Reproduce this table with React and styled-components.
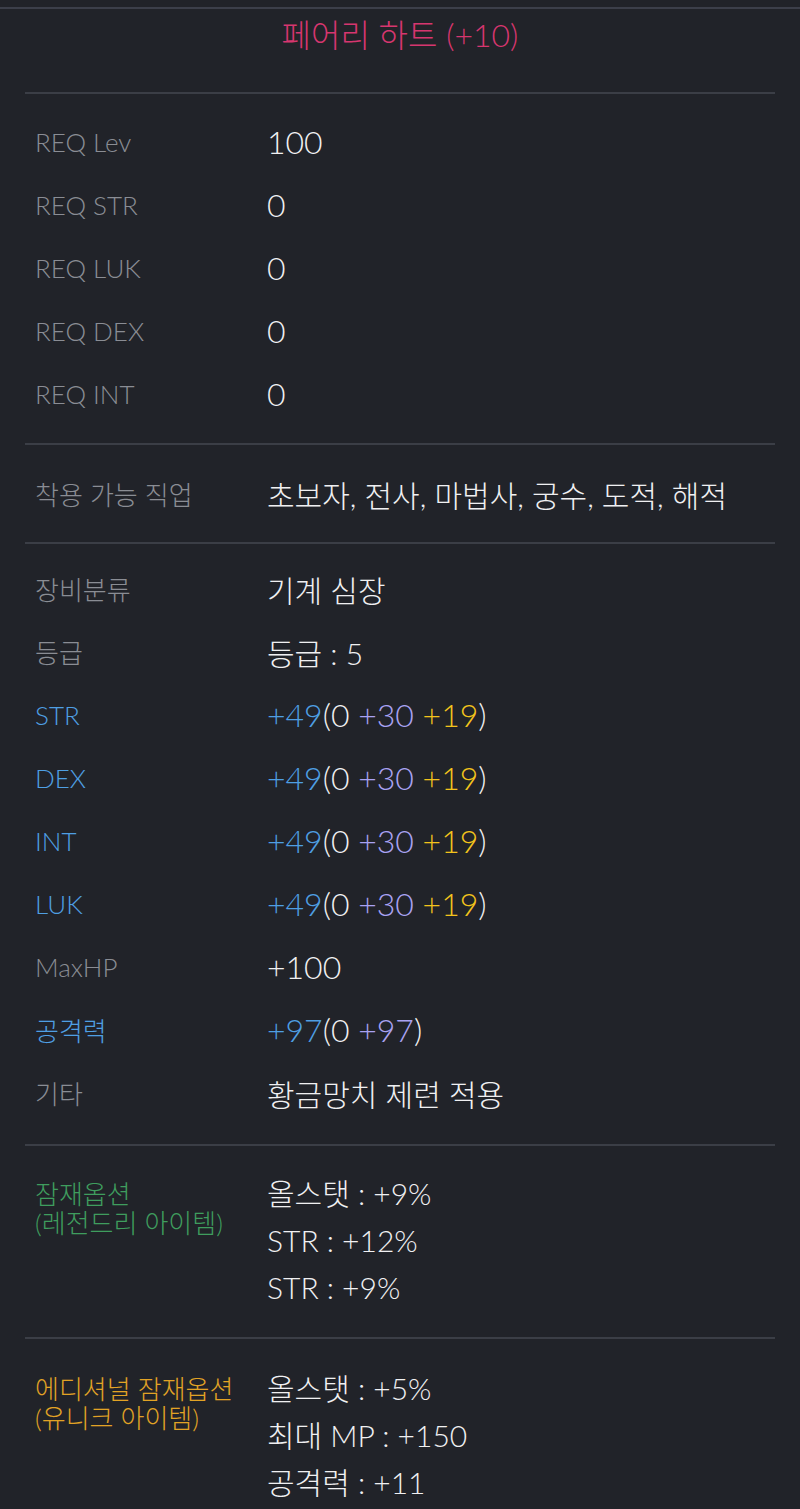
import React from "react";
import styled, { createGlobalStyle } from "styled-components";

const GlobalStyle = createGlobalStyle`
  html, body {
    margin: 0;
    padding: 0;
    background: #212329;
  }
  body {
    font-family: "Lato", "Noto Sans CJK KR", sans-serif;
    font-weight: 300;
    -webkit-font-smoothing: antialiased;
  }
`;

const Page = styled.div`
  width: 800px;
  min-height: 1509px;
  background: #212329;
  border-top: 2px solid #3c3f4a;
  margin-top: 7px;
  box-sizing: border-box;
`;

const Title = styled.h1`
  margin: 0;
  height: 55px;
  display: flex;
  align-items: center;
  justify-content: center;
  padding-bottom: 8px;
  box-sizing: border-box;
  font-weight: 300;
  font-size: 32px;
  color: #d6366f;
`;

const Body = styled.div`
  margin: 0 25px;
  padding-top: 28px;
`;

const Section = styled.section`
  border-top: 2px solid #3b3e46;
  padding: ${(p) => p.$pad || "17px 10px 17px"};
`;

const Row = styled.div`
  display: grid;
  grid-template-columns: 232px 1fr;
  align-items: center;
  height: 63px;
`;

const OptionRow = styled.div`
  display: grid;
  grid-template-columns: 232px 1fr;
  align-items: start;
`;

const Label = styled.div`
  font-size: 26px;
  color: ${(p) => p.$color || "#8a8d94"};
  white-space: nowrap;
`;

const OptionLabel = styled.div`
  padding-top: 10px;
  font-size: 26px;
  line-height: 29px;
  color: ${(p) => p.$color};
  white-space: nowrap;
`;

const Value = styled.div`
  font-size: ${(p) => (p.$ko ? "30px" : "32px")};
  color: #f0f0f2;
  white-space: nowrap;
`;

const Lines = styled.div`
  display: flex;
  flex-direction: column;
`;

const Line = styled.div`
  height: 47px;
  line-height: 47px;
  font-size: 30px;
  color: #f0f0f2;
  white-space: nowrap;
`;

const Tone = styled.span`
  color: ${(p) => p.$c};
`;

const BLUE = "#4f9fe3";
const PURPLE = "#a9a2f2";
const GOLD = "#f3c31c";

const reqs = [
  ["REQ Lev", "100"],
  ["REQ STR", "0"],
  ["REQ LUK", "0"],
  ["REQ DEX", "0"],
  ["REQ INT", "0"],
];

const StatValue = ({ total, base, bonus, star }) => (
  <Value>
    <Tone $c={BLUE}>{total}</Tone>({base} <Tone $c={PURPLE}>{bonus}</Tone>
    {star && (
      <>
        {" "}
        <Tone $c={GOLD}>{star}</Tone>
      </>
    )}
    )
  </Value>
);

const App = () => {
  const stats = ["STR", "DEX", "INT", "LUK"];

  return (
    <>
      <GlobalStyle />
      <Page>
        <Title>페어리 하트 (+10)</Title>
        <Body>
          <Section $pad="16px 10px 18px">
            {reqs.map(([label, value]) => (
              <Row key={label}>
                <Label>{label}</Label>
                <Value>{value}</Value>
              </Row>
            ))}
          </Section>

          <Section>
            <Row>
              <Label>착용 가능 직업</Label>
              <Value $ko>초보자, 전사, 마법사, 궁수, 도적, 해적</Value>
            </Row>
          </Section>

          <Section $pad="13px 10px 20px">
            <Row>
              <Label>장비분류</Label>
              <Value $ko>기계 심장</Value>
            </Row>
            <Row>
              <Label>등급</Label>
              <Value $ko>등급 : 5</Value>
            </Row>
            {stats.map((s) => (
              <Row key={s}>
                <Label $color={BLUE}>{s}</Label>
                <StatValue total="+49" base="0" bonus="+30" star="+19" />
              </Row>
            ))}
            <Row>
              <Label>MaxHP</Label>
              <Value>+100</Value>
            </Row>
            <Row>
              <Label $color={BLUE}>공격력</Label>
              <StatValue total="+97" base="0" bonus="+97" />
            </Row>
            <Row>
              <Label>기타</Label>
              <Value $ko>황금망치 제련 적용</Value>
            </Row>
          </Section>

          <Section $pad="24px 10px 26px">
            <OptionRow>
              <OptionLabel $color="#3f9d5e">
                잠재옵션
                <br />
                (레전드리 아이템)
              </OptionLabel>
              <Lines>
                <Line>올스탯 : +9%</Line>
                <Line>STR : +12%</Line>
                <Line>STR : +9%</Line>
              </Lines>
            </OptionRow>
          </Section>

          <Section $pad="26px 10px 10px">
            <OptionRow>
              <OptionLabel $color="#e2a325">
                에디셔널 잠재옵션
                <br />
                (유니크 아이템)
              </OptionLabel>
              <Lines>
                <Line>올스탯 : +5%</Line>
                <Line>최대 MP : +150</Line>
                <Line>공격력 : +11</Line>
              </Lines>
            </OptionRow>
          </Section>
        </Body>
      </Page>
    </>
  );
};

export default App;
